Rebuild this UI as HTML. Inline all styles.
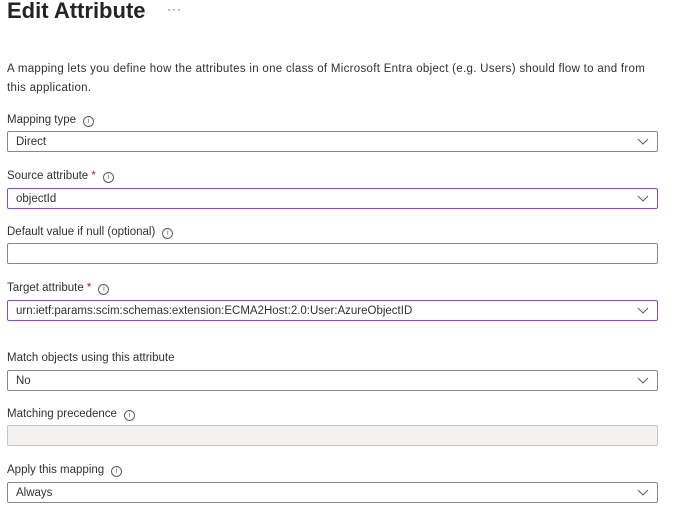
<!DOCTYPE html>
<html><head><style>
body{margin:0;background:#fff;font-family:"Liberation Sans",sans-serif;color:#323130;width:676px;height:532px;overflow:hidden;position:relative}
.a{position:absolute}
.t{left:7px;top:-2px;font-size:22px;font-weight:600;color:#242424}
.dots{left:167px;top:2px;font-size:12px;color:#605e5c;letter-spacing:1px}
.p{left:7px;font-size:11.5px;line-height:19px;width:645px;letter-spacing:0.3px}
.l{left:7px;font-size:11.5px;color:#323130}
.l i{display:inline-block;width:9px;height:9px;border:1px solid #605e5c;border-radius:50%;font-style:normal;font-size:7px;text-align:center;line-height:9px;margin-left:7px;vertical-align:0px;color:#605e5c}
.l b{color:#a4262c;font-weight:normal}
.box{left:7px;height:19px;border:1px solid #8a8886;border-radius:2px;font-size:11.5px;line-height:20px;padding-left:8px;box-sizing:content-box;width:641px}
.box.pu{border-color:#8c4ab8}
.box.dis{background:#f3f2f1;border-color:#c8c6c4}
.box svg{position:absolute;right:8px;top:6px}
</style></head><body>
<div class="a t">Edit Attribute</div>
<div class="a dots">···</div>
<div class="a p" style="top:60px">A mapping lets you define how the attributes in one class of Microsoft Entra object (e.g. Users) should flow to and from<br>this application.</div>

<div class="a l" style="top:114px">Mapping type<i>i</i></div>
<div class="a box" style="top:131px">Direct<svg width="12" height="8"><path d="M1 1l5 5 5-5" fill="none" stroke="#605e5c"/></svg></div>

<div class="a l" style="top:170px">Source attribute <b>*</b><i>i</i></div>
<div class="a box pu" style="top:188px">objectId<svg width="12" height="8"><path d="M1 1l5 5 5-5" fill="none" stroke="#605e5c"/></svg></div>

<div class="a l" style="top:226px">Default value if null (optional)<i>i</i></div>
<div class="a box" style="top:243px"></div>

<div class="a l" style="top:282px">Target attribute <b>*</b><i>i</i></div>
<div class="a box pu" style="top:300px">urn:ietf:params:scim:schemas:extension:ECMA2Host:2.0:User:AzureObjectID<svg width="12" height="8"><path d="M1 1l5 5 5-5" fill="none" stroke="#605e5c"/></svg></div>

<div class="a l" style="top:352px">Match objects using this attribute</div>
<div class="a box" style="top:370px">No<svg width="12" height="8"><path d="M1 1l5 5 5-5" fill="none" stroke="#605e5c"/></svg></div>

<div class="a l" style="top:408px">Matching precedence<i>i</i></div>
<div class="a box dis" style="top:425px"></div>

<div class="a l" style="top:464px">Apply this mapping<i>i</i></div>
<div class="a box" style="top:482px">Always<svg width="12" height="8"><path d="M1 1l5 5 5-5" fill="none" stroke="#605e5c"/></svg></div>
</body></html>
